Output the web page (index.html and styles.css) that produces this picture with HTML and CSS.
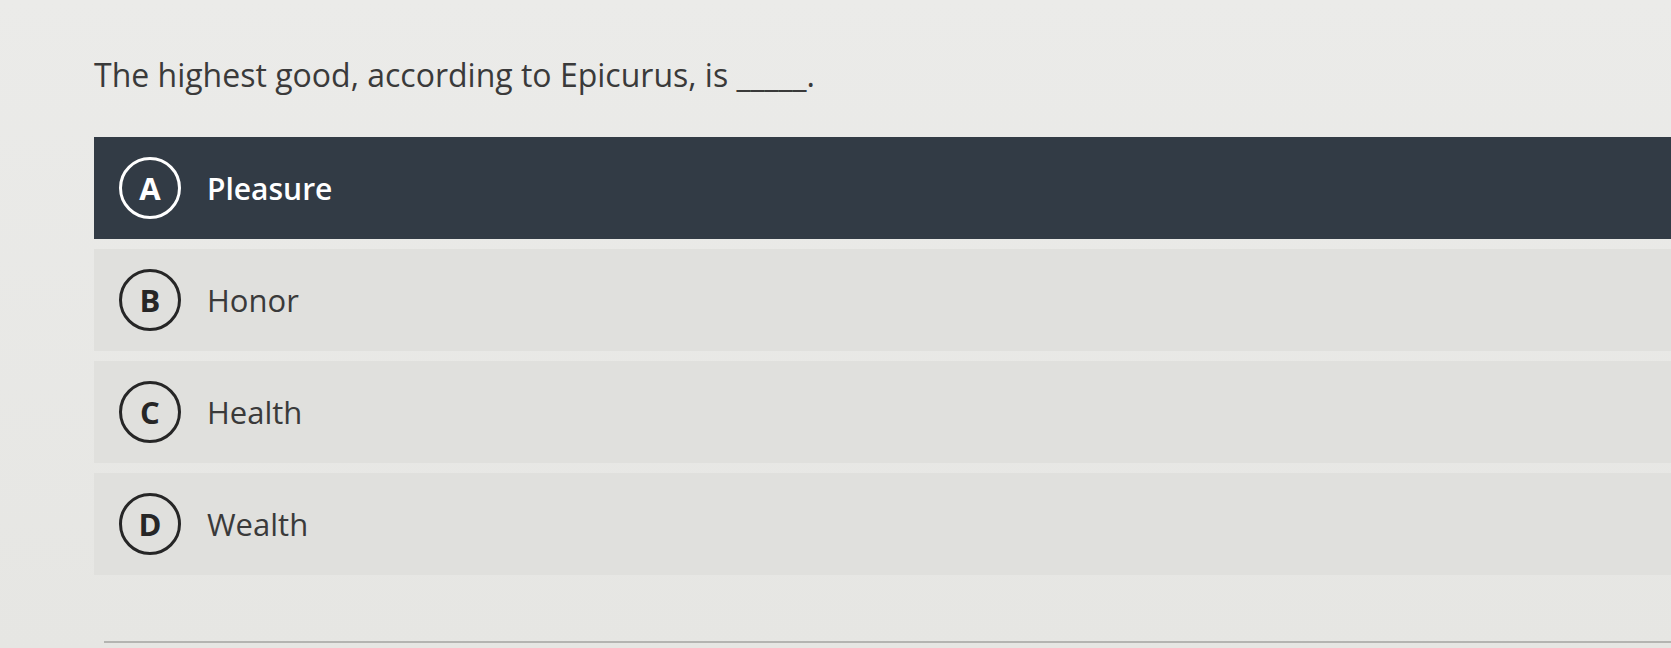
FILE: index.html
```html
<!DOCTYPE html>
<html lang="en">
<head>
<meta charset="utf-8">
<title>Question</title>
<link rel="stylesheet" href="styles.css">
</head>
<body>
<main class="page">
  <p class="question">The highest good, according to Epicurus, is _____.</p>
  <div class="options">
    <div class="option selected"><span class="badge">A</span><span class="label">Pleasure</span></div>
    <div class="option"><span class="badge">B</span><span class="label">Honor</span></div>
    <div class="option"><span class="badge">C</span><span class="label">Health</span></div>
    <div class="option"><span class="badge">D</span><span class="label">Wealth</span></div>
  </div>
  <div class="divider"></div>
</main>
</body>
</html>
```
FILE: styles.css
```css
html, body {
  margin: 0;
  padding: 0;
}
body {
  background: linear-gradient(180deg, #ebebe9 0%, #e6e6e3 100%);
  height: 648px;
  overflow: hidden;
  font-family: "Open Sans", "Liberation Sans", sans-serif;
  color: #383838;
}
.page {
  padding: 53px 0 0 94px;
}
.question {
  margin: 0;
  font-size: 32px;
  line-height: 44px;
  font-weight: 400;
  color: #3a3a3a;
}
.options {
  margin-top: 40px;
  display: flex;
  flex-direction: column;
  gap: 10px;
}
.option {
  height: 102px;
  display: flex;
  align-items: center;
  padding-left: 25px;
  gap: 26px;
  background: #e0e0dd;
}
.option.selected {
  background: #323b45;
  color: #ffffff;
}
.badge {
  width: 62px;
  height: 62px;
  box-sizing: border-box;
  border: 3px solid #262626;
  border-radius: 50%;
  display: flex;
  align-items: center;
  justify-content: center;
  font-size: 31px;
  font-weight: 700;
  color: #262626;
}
.selected .badge {
  border-color: #ffffff;
  color: #ffffff;
}
.label {
  font-size: 31px;
  font-weight: 400;
  color: #3a3a3a;
}
.selected .label {
  font-size: 30px;
  font-weight: 600;
  color: #ffffff;
}
.divider {
  margin-top: 66px;
  margin-left: 10px;
  height: 2px;
  background: #b4b4b1;
}
```
